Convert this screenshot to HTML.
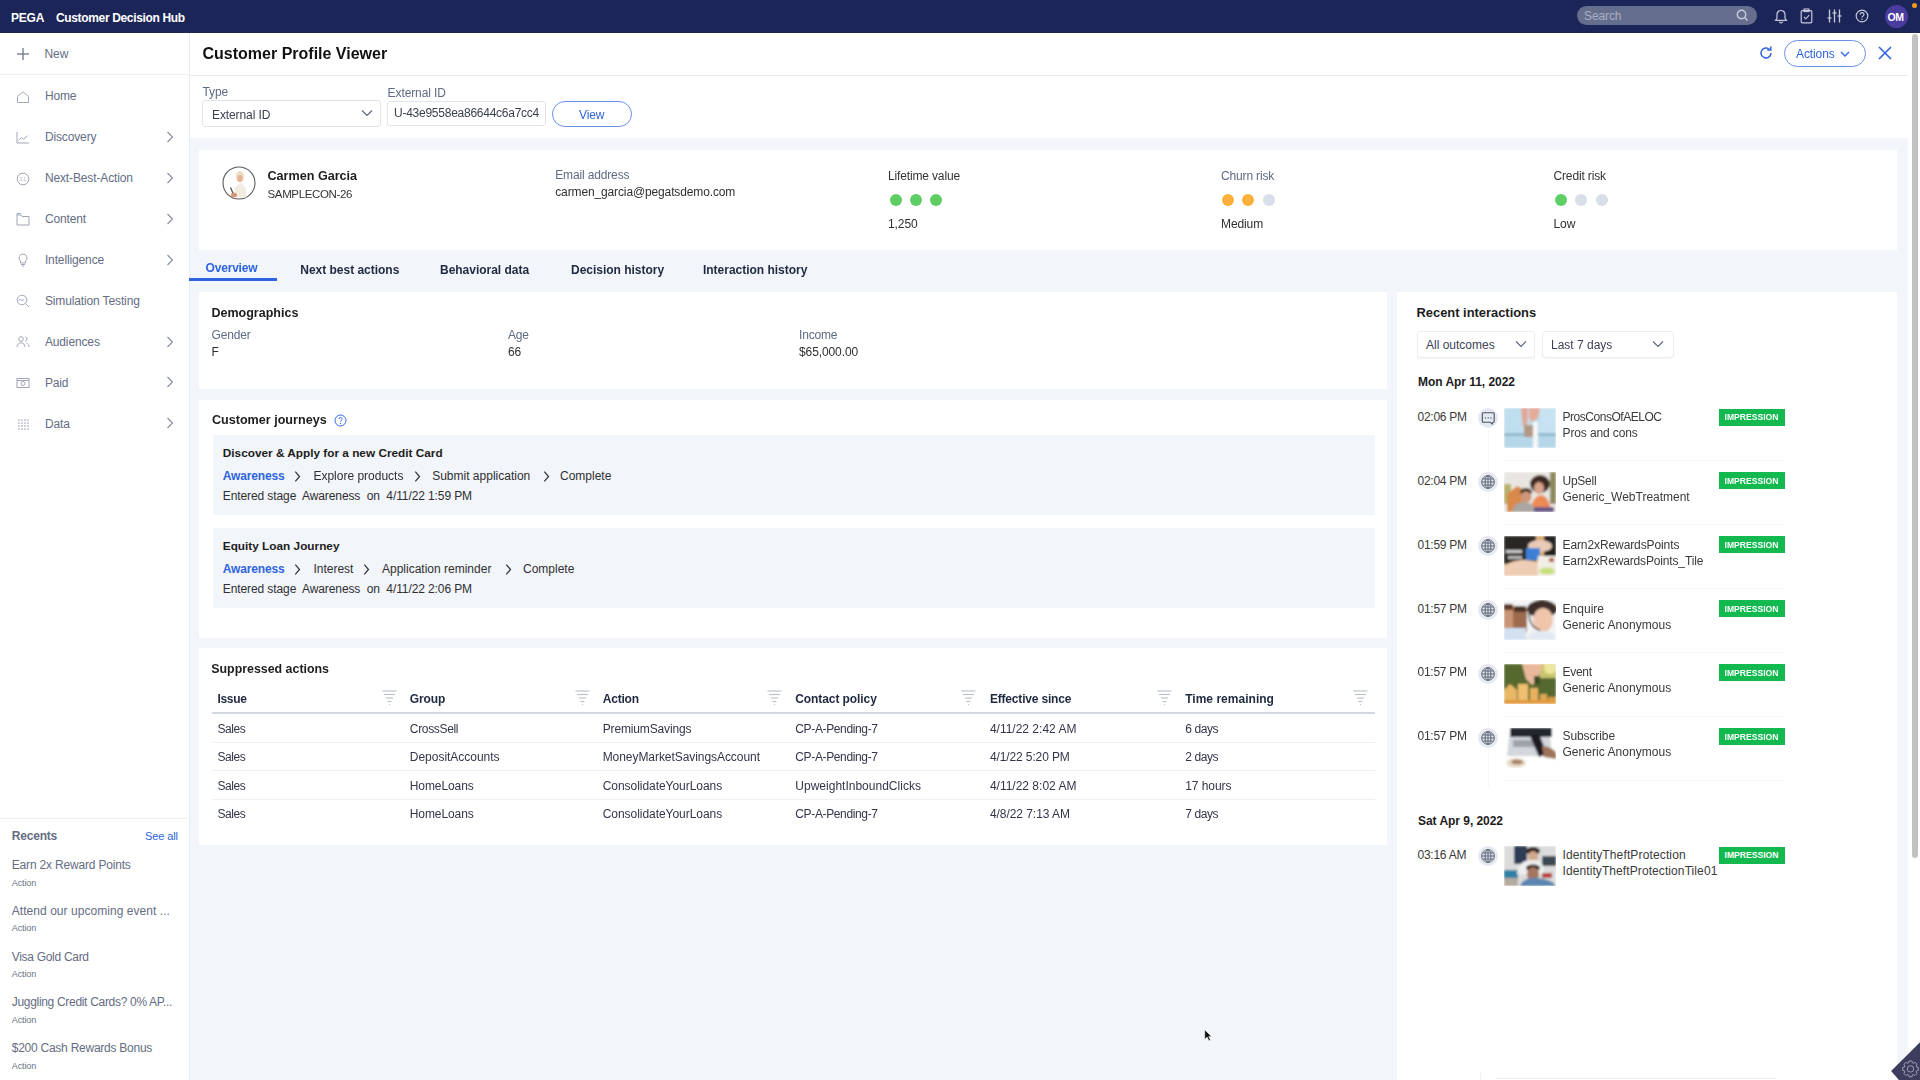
<!DOCTYPE html>
<html><head><meta charset="utf-8"><title>Customer Profile Viewer</title>
<style>
html,body{margin:0;padding:0;}
body{width:1920px;height:1080px;overflow:hidden;position:relative;background:#f2f5f9;font-family:"Liberation Sans",sans-serif;}
.t{position:absolute;white-space:nowrap;line-height:1;}
.r{position:absolute;box-sizing:border-box;}
svg.r{overflow:visible;}
#wrap{position:absolute;left:0;top:0;width:1920px;height:1080px;overflow:hidden;filter:blur(0.45px);}
</style></head><body><div id="wrap">
<svg width="0" height="0" style="position:absolute"><defs><filter id="bl" x="-10%" y="-10%" width="120%" height="120%"><feGaussianBlur stdDeviation="0.9"/></filter></defs></svg>
<div class="r" style="left:0px;top:0px;width:1920px;height:33px;background:#1c2558;"></div>
<div class="t" style="left:11.00px;top:11.84px;font-size:12px;color:#fff;font-weight:700;letter-spacing:-0.2px;">PEGA</div>
<div class="t" style="left:56.00px;top:11.84px;font-size:12px;color:#fff;font-weight:700;letter-spacing:-0.35px;">Customer Decision Hub</div>
<div class="r" style="left:1577px;top:6px;width:180px;height:19px;background:#666e8e;border-radius:10px;"></div>
<div class="t" style="left:1584.00px;top:9.84px;font-size:12px;color:#a9aec6;letter-spacing:-0.1px;">Search</div>
<svg class="r" style="left:1736px;top:9px" width="13" height="13" viewBox="0 0 13 13"><circle cx="5.5" cy="5.5" r="4.2" fill="none" stroke="#c9cce0" stroke-width="1.4"/><line x1="8.6" y1="8.6" x2="11.5" y2="11.5" stroke="#c9cce0" stroke-width="1.4"/></svg>
<svg class="r" style="left:1774px;top:9px" width="14" height="15" viewBox="0 0 14 15"><path d="M7 1.5c-2.5 0-4 2-4 4.2v3.5L1.6 11.4h10.8L11 9.2V5.7C11 3.5 9.5 1.5 7 1.5z" fill="none" stroke="#c6c9dc" stroke-width="1.2"/><path d="M5.3 12.6a1.8 1.8 0 0 0 3.4 0" fill="none" stroke="#c6c9dc" stroke-width="1.2"/></svg>
<svg class="r" style="left:1800px;top:8px" width="13" height="16" viewBox="0 0 13 16"><rect x="1.2" y="2.6" width="10.6" height="12.2" rx="1" fill="none" stroke="#c6c9dc" stroke-width="1.2"/><rect x="4" y="1" width="5" height="2.6" fill="none" stroke="#c6c9dc" stroke-width="1.1"/><path d="M4 9l1.8 1.8L9.2 7.2" fill="none" stroke="#c6c9dc" stroke-width="1.1"/></svg>
<svg class="r" style="left:1827px;top:9px" width="15" height="14" viewBox="0 0 15 14"><g stroke="#c6c9dc" stroke-width="1.3"><line x1="2.5" y1="0.5" x2="2.5" y2="13.5"/><line x1="7.5" y1="0.5" x2="7.5" y2="13.5"/><line x1="12.5" y1="0.5" x2="12.5" y2="13.5"/><line x1="0.5" y1="9" x2="4.5" y2="9"/><line x1="5.5" y1="4" x2="9.5" y2="4"/><line x1="10.5" y1="7" x2="14.5" y2="7"/></g></svg>
<svg class="r" style="left:1855px;top:9px" width="14" height="14" viewBox="0 0 14 14"><circle cx="7" cy="7" r="5.8" fill="none" stroke="#c6c9dc" stroke-width="1.2"/><path d="M5.2 5.4a1.9 1.9 0 1 1 2.6 1.8c-.6.3-.8.6-.8 1.3" fill="none" stroke="#c6c9dc" stroke-width="1.2"/><circle cx="7" cy="10.3" r=".75" fill="#c6c9dc"/></svg>
<div class="r" style="left:1885px;top:5px;width:23px;height:23px;background:#4a3b9e;border-radius:50%;"></div>
<div class="t" style="left:1887.50px;top:11.61px;font-size:10.5px;color:#fff;font-weight:700;letter-spacing:-0.4px;">OM</div>
<div class="r" style="left:1912px;top:3px;width:5px;height:5px;background:#f39a1e;border-radius:50%;"></div>
<div class="r" style="left:0px;top:33px;width:189px;height:1047px;background:#fff;"></div>
<div class="r" style="left:189px;top:33px;width:1px;height:1047px;background:#e9ecf1;"></div>
<svg class="r" style="left:16px;top:47px" width="14" height="14" viewBox="0 0 14 14"><g stroke="#6e7690" stroke-width="1.3"><line x1="7" y1="1" x2="7" y2="13"/><line x1="1" y1="7" x2="13" y2="7"/></g></svg>
<div class="t" style="left:44.50px;top:47.64px;font-size:12px;color:#656d83;letter-spacing:-0.1px;">New</div>
<div class="r" style="left:0px;top:74px;width:189px;height:1px;background:#eceef2;"></div>
<div class="t" style="left:44.90px;top:90.44px;font-size:12px;color:#656d83;letter-spacing:-0.13px;">Home</div>
<svg class="r" style="left:16px;top:89.6px" width="14" height="14" viewBox="0 0 14 14"><path d="M1.5 6.5L7 1.8l5.5 4.7V12.5h-11z" fill="none" stroke="#a2a7b7" stroke-width="1"/></svg>
<div class="t" style="left:44.90px;top:131.39px;font-size:12px;color:#656d83;letter-spacing:-0.13px;">Discovery</div>
<svg class="r" style="left:16px;top:130.6px" width="14" height="14" viewBox="0 0 14 14"><path d="M1 1v11h12M2.5 9.5l3-3 2 1.8 4-3.6" fill="none" stroke="#a2a7b7" stroke-width="1"/></svg>
<svg class="r" style="left:166px;top:130.8px" width="8" height="12" viewBox="0 0 8 12"><path d="M1.5 1l5 5-5 5" fill="none" stroke="#8a90a3" stroke-width="1.15"/></svg>
<div class="t" style="left:44.90px;top:172.34px;font-size:12px;color:#656d83;letter-spacing:-0.13px;">Next-Best-Action</div>
<svg class="r" style="left:16px;top:171.5px" width="14" height="14" viewBox="0 0 14 14"><circle cx="7" cy="7" r="5.8" fill="none" stroke="#a2a7b7" stroke-width="1"/><text x="7" y="8.8" font-size="4.5" text-anchor="middle" fill="#a2a7b7" font-family="Liberation Sans">1:1</text></svg>
<svg class="r" style="left:166px;top:171.7px" width="8" height="12" viewBox="0 0 8 12"><path d="M1.5 1l5 5-5 5" fill="none" stroke="#8a90a3" stroke-width="1.15"/></svg>
<div class="t" style="left:44.90px;top:213.29px;font-size:12px;color:#656d83;letter-spacing:-0.13px;">Content</div>
<svg class="r" style="left:16px;top:212.4px" width="14" height="14" viewBox="0 0 14 14"><path d="M1 3h4l1 1.5h7V13H1z M1 3V1.5h4" fill="none" stroke="#a2a7b7" stroke-width="1"/></svg>
<svg class="r" style="left:166px;top:212.6px" width="8" height="12" viewBox="0 0 8 12"><path d="M1.5 1l5 5-5 5" fill="none" stroke="#8a90a3" stroke-width="1.15"/></svg>
<div class="t" style="left:44.90px;top:254.24px;font-size:12px;color:#656d83;letter-spacing:-0.13px;">Intelligence</div>
<svg class="r" style="left:16px;top:253.4px" width="14" height="14" viewBox="0 0 14 14"><path d="M7 1a4 4 0 0 0-2.5 7.1V10h5V8.1A4 4 0 0 0 7 1zM5 11.5h4M5.8 13h2.4" fill="none" stroke="#a2a7b7" stroke-width="1"/></svg>
<svg class="r" style="left:166px;top:253.6px" width="8" height="12" viewBox="0 0 8 12"><path d="M1.5 1l5 5-5 5" fill="none" stroke="#8a90a3" stroke-width="1.15"/></svg>
<div class="t" style="left:44.90px;top:295.19px;font-size:12px;color:#656d83;letter-spacing:-0.13px;">Simulation Testing</div>
<svg class="r" style="left:16px;top:294.4px" width="14" height="14" viewBox="0 0 14 14"><circle cx="6" cy="6" r="4.8" fill="none" stroke="#a2a7b7" stroke-width="1"/><path d="M9.5 9.5L13 13M2.5 6.5l1.8-1.5 1.8 2 2-2" fill="none" stroke="#a2a7b7" stroke-width="1"/></svg>
<div class="t" style="left:44.90px;top:336.14px;font-size:12px;color:#656d83;letter-spacing:-0.13px;">Audiences</div>
<svg class="r" style="left:16px;top:335.3px" width="14" height="14" viewBox="0 0 14 14"><circle cx="5" cy="4" r="2.3" fill="none" stroke="#a2a7b7" stroke-width="1"/><path d="M1 12c0-2.5 1.8-4.2 4-4.2s4 1.7 4 4.2M9.3 1.8a2.2 2.2 0 0 1 0 4.3M10.5 8c1.5.6 2.5 2 2.5 4" fill="none" stroke="#a2a7b7" stroke-width="1"/></svg>
<svg class="r" style="left:166px;top:335.5px" width="8" height="12" viewBox="0 0 8 12"><path d="M1.5 1l5 5-5 5" fill="none" stroke="#8a90a3" stroke-width="1.15"/></svg>
<div class="t" style="left:44.90px;top:377.09px;font-size:12px;color:#656d83;letter-spacing:-0.13px;">Paid</div>
<svg class="r" style="left:16px;top:376.2px" width="14" height="14" viewBox="0 0 14 14"><rect x="1" y="2.5" width="12" height="9" fill="none" stroke="#a2a7b7" stroke-width="1"/><circle cx="7" cy="7.5" r="2" fill="none" stroke="#a2a7b7" stroke-width="1"/><line x1="1" y1="4.5" x2="13" y2="4.5" stroke="#a2a7b7" stroke-width="1"/></svg>
<svg class="r" style="left:166px;top:376.4px" width="8" height="12" viewBox="0 0 8 12"><path d="M1.5 1l5 5-5 5" fill="none" stroke="#8a90a3" stroke-width="1.15"/></svg>
<div class="t" style="left:44.90px;top:418.04px;font-size:12px;color:#656d83;letter-spacing:-0.13px;">Data</div>
<svg class="r" style="left:16px;top:417.2px" width="14" height="14" viewBox="0 0 14 14"><g fill="#a2a7b7"><circle cx="3" cy="3" r="0.85"/><circle cx="3" cy="6" r="0.85"/><circle cx="3" cy="9" r="0.85"/><circle cx="3" cy="12" r="0.85"/><circle cx="6" cy="3" r="0.85"/><circle cx="6" cy="6" r="0.85"/><circle cx="6" cy="9" r="0.85"/><circle cx="6" cy="12" r="0.85"/><circle cx="9" cy="3" r="0.85"/><circle cx="9" cy="6" r="0.85"/><circle cx="9" cy="9" r="0.85"/><circle cx="9" cy="12" r="0.85"/><circle cx="12" cy="3" r="0.85"/><circle cx="12" cy="6" r="0.85"/><circle cx="12" cy="9" r="0.85"/><circle cx="12" cy="12" r="0.85"/></g></svg>
<svg class="r" style="left:166px;top:417.4px" width="8" height="12" viewBox="0 0 8 12"><path d="M1.5 1l5 5-5 5" fill="none" stroke="#8a90a3" stroke-width="1.15"/></svg>
<div class="r" style="left:0px;top:818px;width:187px;height:1px;background:#eceef2;"></div>
<div class="t" style="left:11.75px;top:829.84px;font-size:12px;color:#656d83;font-weight:700;letter-spacing:-0.2px;">Recents</div>
<div class="t" style="left:145.00px;top:830.69px;font-size:11px;color:#2e64e0;letter-spacing:-0.1px;">See all</div>
<div class="t" style="left:11.75px;top:859.09px;font-size:12px;color:#656d83;letter-spacing:-0.18px;">Earn 2x Reward Points</div>
<div class="t" style="left:11.75px;top:878.63px;font-size:9px;color:#6b7388;letter-spacing:-0.1px;">Action</div>
<div class="t" style="left:11.75px;top:904.89px;font-size:12px;color:#656d83;letter-spacing:0.05px;">Attend our upcoming event ...</div>
<div class="t" style="left:11.75px;top:924.43px;font-size:9px;color:#6b7388;letter-spacing:-0.1px;">Action</div>
<div class="t" style="left:11.75px;top:950.69px;font-size:12px;color:#656d83;letter-spacing:-0.3px;">Visa Gold Card</div>
<div class="t" style="left:11.75px;top:970.23px;font-size:9px;color:#6b7388;letter-spacing:-0.1px;">Action</div>
<div class="t" style="left:11.75px;top:996.49px;font-size:12px;color:#656d83;letter-spacing:-0.31px;">Juggling Credit Cards? 0% AP...</div>
<div class="t" style="left:11.75px;top:1016.03px;font-size:9px;color:#6b7388;letter-spacing:-0.1px;">Action</div>
<div class="t" style="left:11.75px;top:1042.29px;font-size:12px;color:#656d83;letter-spacing:-0.25px;">$200 Cash Rewards Bonus</div>
<div class="t" style="left:11.75px;top:1061.83px;font-size:9px;color:#6b7388;letter-spacing:-0.1px;">Action</div>
<div class="r" style="left:190px;top:33px;width:1718px;height:43px;background:#fff;"></div>
<div class="r" style="left:190px;top:75px;width:1718px;height:1px;background:#e8ebf0;"></div>
<div class="t" style="left:202.50px;top:45.86px;font-size:16px;color:#111;font-weight:700;">Customer Profile Viewer</div>
<svg class="r" style="left:1758px;top:45px" width="16" height="16" viewBox="0 0 16 16"><path d="M13 8a5 5 0 1 1-1.6-3.7" fill="none" stroke="#2e64e0" stroke-width="1.5"/><path d="M12.8 1.5v3.6H9.2" fill="none" stroke="#2e64e0" stroke-width="1.5"/></svg>
<div class="r" style="left:1784px;top:40px;width:82px;height:27px;background:#fff;border:1px solid #6a8fe6;border-radius:14px;"></div>
<div class="t" style="left:1796.00px;top:48.14px;font-size:12px;color:#2e64e0;letter-spacing:-0.1px;">Actions</div>
<svg class="r" style="left:1840px;top:51px" width="10" height="6" viewBox="0 0 10 6"><path d="M1 1l4 4 4-4" fill="none" stroke="#2e64e0" stroke-width="1.3"/></svg>
<svg class="r" style="left:1878px;top:46px" width="14" height="14" viewBox="0 0 14 14"><path d="M1 1l12 12M13 1L1 13" stroke="#2e64e0" stroke-width="1.6"/></svg>
<div class="r" style="left:190px;top:76px;width:1718px;height:62px;background:#fff;"></div>
<div class="t" style="left:202.50px;top:85.84px;font-size:12px;color:#5d6b84;letter-spacing:-0.1px;">Type</div>
<div class="r" style="left:202px;top:100px;width:179px;height:27px;background:#fff;border:1px solid #dfe3ea;border-radius:3px;"></div>
<div class="t" style="left:212.00px;top:108.54px;font-size:12px;color:#3a3f4f;letter-spacing:-0.1px;">External ID</div>
<svg class="r" style="left:361px;top:109px" width="12" height="8" viewBox="0 0 12 8"><path d="M1 1.5l5 5 5-5" fill="none" stroke="#5f6882" stroke-width="1.2"/></svg>
<div class="t" style="left:387.60px;top:86.74px;font-size:12px;color:#5d6b84;letter-spacing:-0.1px;">External ID</div>
<div class="r" style="left:387px;top:100.5px;width:158.5px;height:25px;background:#fff;border:1px solid #dfe3ea;border-radius:3px;"></div>
<div class="t" style="left:394.00px;top:106.84px;font-size:12px;color:#3a3f4f;letter-spacing:-0.25px;">U-43e9558ea86644c6a7cc4</div>
<div class="r" style="left:552px;top:101px;width:80px;height:26px;background:#fff;border:1px solid #6a8fe6;border-radius:13px;"></div>
<div class="t" style="left:579.00px;top:108.84px;font-size:12px;color:#2e64e0;letter-spacing:-0.1px;">View</div>
<div class="r" style="left:199px;top:150px;width:1698px;height:100px;background:#fff;"></div>
<svg class="r" style="left:222px;top:166px" width="34" height="34" viewBox="0 0 34 34"><circle cx="17" cy="17" r="16" fill="#fff" stroke="#5a5a5a" stroke-width="1.1"/><ellipse cx="18" cy="10.5" rx="4.2" ry="5.5" fill="#efdcc8"/><ellipse cx="18" cy="12.5" rx="2.6" ry="3.6" fill="#e8b49a"/><path d="M11.5 31.5c0-8 2.5-13 6.5-14.5 4.5 1 6.5 6 6.5 14.5z" fill="#f4ece2"/><path d="M8.5 21.5l3 7" stroke="#555" stroke-width="1.3"/><ellipse cx="12" cy="29" rx="3" ry="2.2" fill="#d69575"/></svg>
<div class="t" style="left:267.50px;top:170.33px;font-size:12.6px;color:#1d1d1d;font-weight:700;">Carmen Garcia</div>
<div class="t" style="left:267.50px;top:188.87px;font-size:11.5px;color:#333;letter-spacing:-0.35px;">SAMPLECON-26</div>
<div class="t" style="left:555.25px;top:168.84px;font-size:12px;color:#5d6b84;letter-spacing:-0.15px;">Email address</div>
<div class="t" style="left:555.25px;top:186.34px;font-size:12px;color:#2f2f33;letter-spacing:-0.13px;">carmen_garcia@pegatsdemo.com</div>
<div class="t" style="left:888.00px;top:169.84px;font-size:12px;color:#333;letter-spacing:-0.15px;">Lifetime value</div>
<div class="r" style="left:889.75px;top:194px;width:12px;height:12px;background:#5fcf65;border-radius:50%;"></div>
<div class="r" style="left:910.0px;top:194px;width:12px;height:12px;background:#5fcf65;border-radius:50%;"></div>
<div class="r" style="left:930.25px;top:194px;width:12px;height:12px;background:#5fcf65;border-radius:50%;"></div>
<div class="t" style="left:888.00px;top:217.84px;font-size:12px;color:#2f2f33;letter-spacing:-0.1px;">1,250</div>
<div class="t" style="left:1221.00px;top:169.84px;font-size:12px;color:#5d6b84;letter-spacing:-0.15px;">Churn risk</div>
<div class="r" style="left:1222.0px;top:194px;width:12px;height:12px;background:#fbb03b;border-radius:50%;"></div>
<div class="r" style="left:1242.25px;top:194px;width:12px;height:12px;background:#fbb03b;border-radius:50%;"></div>
<div class="r" style="left:1262.5px;top:194px;width:12px;height:12px;background:#d8dfe8;border-radius:50%;"></div>
<div class="t" style="left:1221.00px;top:217.84px;font-size:12px;color:#2f2f33;letter-spacing:-0.1px;">Medium</div>
<div class="t" style="left:1553.50px;top:169.84px;font-size:12px;color:#333;letter-spacing:-0.15px;">Credit risk</div>
<div class="r" style="left:1555.0px;top:194px;width:12px;height:12px;background:#5fcf65;border-radius:50%;"></div>
<div class="r" style="left:1575.25px;top:194px;width:12px;height:12px;background:#d8dfe8;border-radius:50%;"></div>
<div class="r" style="left:1595.5px;top:194px;width:12px;height:12px;background:#d8dfe8;border-radius:50%;"></div>
<div class="t" style="left:1553.50px;top:217.84px;font-size:12px;color:#2f2f33;letter-spacing:-0.1px;">Low</div>
<div class="t" style="left:205.60px;top:262.14px;font-size:12px;color:#2e64e0;font-weight:700;letter-spacing:-0.2px;">Overview</div>
<div class="r" style="left:189px;top:278px;width:88px;height:3px;background:#2e64e0;"></div>
<div class="t" style="left:300.30px;top:264.44px;font-size:12px;color:#1f2940;font-weight:700;letter-spacing:-0.02px;">Next best actions</div>
<div class="t" style="left:440.00px;top:264.44px;font-size:12px;color:#1f2940;font-weight:700;letter-spacing:-0.02px;">Behavioral data</div>
<div class="t" style="left:571.00px;top:264.44px;font-size:12px;color:#1f2940;font-weight:700;letter-spacing:-0.02px;">Decision history</div>
<div class="t" style="left:703.00px;top:264.44px;font-size:12px;color:#1f2940;font-weight:700;letter-spacing:-0.02px;">Interaction history</div>
<div class="r" style="left:199px;top:292px;width:1188px;height:97px;background:#fff;"></div>
<div class="t" style="left:211.50px;top:306.67px;font-size:12.5px;color:#1d1d1d;font-weight:700;">Demographics</div>
<div class="t" style="left:211.50px;top:328.59px;font-size:12px;color:#5d6b84;letter-spacing:-0.17px;">Gender</div>
<div class="t" style="left:211.50px;top:346.24px;font-size:12px;color:#2f2f33;letter-spacing:-0.1px;">F</div>
<div class="t" style="left:508.00px;top:328.59px;font-size:12px;color:#5d6b84;letter-spacing:-0.17px;">Age</div>
<div class="t" style="left:508.00px;top:346.24px;font-size:12px;color:#2f2f33;letter-spacing:-0.1px;">66</div>
<div class="t" style="left:799.00px;top:328.59px;font-size:12px;color:#5d6b84;letter-spacing:-0.17px;">Income</div>
<div class="t" style="left:799.00px;top:346.24px;font-size:12px;color:#2f2f33;letter-spacing:-0.1px;">$65,000.00</div>
<div class="r" style="left:199px;top:400px;width:1188px;height:238px;background:#fff;"></div>
<div class="t" style="left:211.90px;top:413.73px;font-size:12.6px;color:#1d1d1d;font-weight:700;">Customer journeys</div>
<svg class="r" style="left:334px;top:414px" width="13" height="13" viewBox="0 0 13 13"><circle cx="6.5" cy="6.5" r="5.5" fill="none" stroke="#2e64e0" stroke-width="1"/><path d="M4.9 5a1.6 1.6 0 1 1 2.3 1.5c-.5.3-.7.5-.7 1.1" fill="none" stroke="#2e64e0" stroke-width="1"/><circle cx="6.5" cy="9.4" r=".6" fill="#2e64e0"/></svg>
<div class="r" style="left:212.6px;top:435.3px;width:1162.4px;height:80px;background:#f2f5f9;"></div>
<div class="t" style="left:222.80px;top:448.31px;font-size:11.8px;color:#1d1d1d;font-weight:700;">Discover &amp; Apply for a new Credit Card</div>
<div class="t" style="left:222.80px;top:470.44px;font-size:12px;color:#2e64e0;font-weight:700;letter-spacing:-0.16px;">Awareness</div>
<svg class="r" style="left:294.3px;top:471.2px" width="7" height="11" viewBox="0 0 7 11"><path d="M1.3 0.6l4.2 4.9-4.2 4.9" fill="none" stroke="#383838" stroke-width="1.25"/></svg>
<div class="t" style="left:313.40px;top:470.44px;font-size:12px;color:#2f2f33;">Explore products</div>
<svg class="r" style="left:413.8px;top:471.2px" width="7" height="11" viewBox="0 0 7 11"><path d="M1.3 0.6l4.2 4.9-4.2 4.9" fill="none" stroke="#383838" stroke-width="1.25"/></svg>
<div class="t" style="left:432.20px;top:470.44px;font-size:12px;color:#2f2f33;">Submit application</div>
<svg class="r" style="left:543.3px;top:471.2px" width="7" height="11" viewBox="0 0 7 11"><path d="M1.3 0.6l4.2 4.9-4.2 4.9" fill="none" stroke="#383838" stroke-width="1.25"/></svg>
<div class="t" style="left:560.00px;top:470.44px;font-size:12px;color:#2f2f33;">Complete</div>
<div class="t" style="left:222.80px;top:489.84px;font-size:12px;color:#2f2f33;letter-spacing:-0.1px;white-space:pre;">Entered stage  Awareness  on  4/11/22 1:59 PM</div>
<div class="r" style="left:212.6px;top:528px;width:1162.4px;height:80px;background:#f2f5f9;"></div>
<div class="t" style="left:222.80px;top:541.01px;font-size:11.8px;color:#1d1d1d;font-weight:700;">Equity Loan Journey</div>
<div class="t" style="left:222.80px;top:563.14px;font-size:12px;color:#2e64e0;font-weight:700;letter-spacing:-0.16px;">Awareness</div>
<svg class="r" style="left:294.3px;top:563.9px" width="7" height="11" viewBox="0 0 7 11"><path d="M1.3 0.6l4.2 4.9-4.2 4.9" fill="none" stroke="#383838" stroke-width="1.25"/></svg>
<div class="t" style="left:313.40px;top:563.14px;font-size:12px;color:#2f2f33;">Interest</div>
<svg class="r" style="left:363.3px;top:563.9px" width="7" height="11" viewBox="0 0 7 11"><path d="M1.3 0.6l4.2 4.9-4.2 4.9" fill="none" stroke="#383838" stroke-width="1.25"/></svg>
<div class="t" style="left:382.00px;top:563.14px;font-size:12px;color:#2f2f33;">Application reminder</div>
<svg class="r" style="left:505.3px;top:563.9px" width="7" height="11" viewBox="0 0 7 11"><path d="M1.3 0.6l4.2 4.9-4.2 4.9" fill="none" stroke="#383838" stroke-width="1.25"/></svg>
<div class="t" style="left:523.00px;top:563.14px;font-size:12px;color:#2f2f33;">Complete</div>
<div class="t" style="left:222.80px;top:582.54px;font-size:12px;color:#2f2f33;letter-spacing:-0.1px;white-space:pre;">Entered stage  Awareness  on  4/11/22 2:06 PM</div>
<div class="r" style="left:199px;top:648px;width:1188px;height:197px;background:#fff;"></div>
<div class="t" style="left:211.25px;top:663.00px;font-size:12.4px;color:#1d1d1d;font-weight:700;">Suppressed actions</div>
<div class="t" style="left:217.50px;top:692.94px;font-size:12px;color:#1f2940;font-weight:700;letter-spacing:-0.34px;">Issue</div>
<svg class="r" style="left:381.5px;top:690px" width="15" height="15" viewBox="0 0 15 15"><g stroke="#b9bfca" stroke-width="1.1"><line x1="0.5" y1="1" x2="14.5" y2="1"/><line x1="2" y1="4.5" x2="13" y2="4.5"/><line x1="4" y1="8" x2="11" y2="8"/><line x1="5.5" y1="11.5" x2="9.5" y2="11.5"/><line x1="7" y1="14.5" x2="8" y2="14.5"/></g></svg>
<div class="t" style="left:409.80px;top:692.94px;font-size:12px;color:#1f2940;font-weight:700;letter-spacing:-0.1px;">Group</div>
<svg class="r" style="left:574.5px;top:690px" width="15" height="15" viewBox="0 0 15 15"><g stroke="#b9bfca" stroke-width="1.1"><line x1="0.5" y1="1" x2="14.5" y2="1"/><line x1="2" y1="4.5" x2="13" y2="4.5"/><line x1="4" y1="8" x2="11" y2="8"/><line x1="5.5" y1="11.5" x2="9.5" y2="11.5"/><line x1="7" y1="14.5" x2="8" y2="14.5"/></g></svg>
<div class="t" style="left:602.70px;top:692.94px;font-size:12px;color:#1f2940;font-weight:700;letter-spacing:-0.19px;">Action</div>
<svg class="r" style="left:767.2px;top:690px" width="15" height="15" viewBox="0 0 15 15"><g stroke="#b9bfca" stroke-width="1.1"><line x1="0.5" y1="1" x2="14.5" y2="1"/><line x1="2" y1="4.5" x2="13" y2="4.5"/><line x1="4" y1="8" x2="11" y2="8"/><line x1="5.5" y1="11.5" x2="9.5" y2="11.5"/><line x1="7" y1="14.5" x2="8" y2="14.5"/></g></svg>
<div class="t" style="left:795.30px;top:692.94px;font-size:12px;color:#1f2940;font-weight:700;letter-spacing:-0.09px;">Contact policy</div>
<svg class="r" style="left:961.3px;top:690px" width="15" height="15" viewBox="0 0 15 15"><g stroke="#b9bfca" stroke-width="1.1"><line x1="0.5" y1="1" x2="14.5" y2="1"/><line x1="2" y1="4.5" x2="13" y2="4.5"/><line x1="4" y1="8" x2="11" y2="8"/><line x1="5.5" y1="11.5" x2="9.5" y2="11.5"/><line x1="7" y1="14.5" x2="8" y2="14.5"/></g></svg>
<div class="t" style="left:989.90px;top:692.94px;font-size:12px;color:#1f2940;font-weight:700;letter-spacing:-0.18px;">Effective since</div>
<svg class="r" style="left:1156.5px;top:690px" width="15" height="15" viewBox="0 0 15 15"><g stroke="#b9bfca" stroke-width="1.1"><line x1="0.5" y1="1" x2="14.5" y2="1"/><line x1="2" y1="4.5" x2="13" y2="4.5"/><line x1="4" y1="8" x2="11" y2="8"/><line x1="5.5" y1="11.5" x2="9.5" y2="11.5"/><line x1="7" y1="14.5" x2="8" y2="14.5"/></g></svg>
<div class="t" style="left:1185.20px;top:692.94px;font-size:12px;color:#1f2940;font-weight:700;letter-spacing:0.02px;">Time remaining</div>
<svg class="r" style="left:1352.7px;top:690px" width="15" height="15" viewBox="0 0 15 15"><g stroke="#b9bfca" stroke-width="1.1"><line x1="0.5" y1="1" x2="14.5" y2="1"/><line x1="2" y1="4.5" x2="13" y2="4.5"/><line x1="4" y1="8" x2="11" y2="8"/><line x1="5.5" y1="11.5" x2="9.5" y2="11.5"/><line x1="7" y1="14.5" x2="8" y2="14.5"/></g></svg>
<div class="r" style="left:212px;top:712px;width:1163px;height:2px;background:#d3d8e0;"></div>
<div class="t" style="left:217.50px;top:722.94px;font-size:12px;color:#33364a;letter-spacing:-0.45px;">Sales</div>
<div class="t" style="left:409.80px;top:722.94px;font-size:12px;color:#33364a;letter-spacing:-0.33px;">CrossSell</div>
<div class="t" style="left:602.70px;top:722.94px;font-size:12px;color:#33364a;letter-spacing:-0.14px;">PremiumSavings</div>
<div class="t" style="left:795.30px;top:722.94px;font-size:12px;color:#33364a;letter-spacing:-0.36px;">CP-A-Pending-7</div>
<div class="t" style="left:989.90px;top:722.94px;font-size:12px;color:#33364a;">4/11/22 2:42 AM</div>
<div class="t" style="left:1185.20px;top:722.94px;font-size:12px;color:#33364a;letter-spacing:-0.41px;">6 days</div>
<div class="t" style="left:217.50px;top:751.14px;font-size:12px;color:#33364a;letter-spacing:-0.45px;">Sales</div>
<div class="t" style="left:409.80px;top:751.14px;font-size:12px;color:#33364a;letter-spacing:-0.02px;">DepositAccounts</div>
<div class="t" style="left:602.70px;top:751.14px;font-size:12px;color:#33364a;letter-spacing:-0.06px;">MoneyMarketSavingsAccount</div>
<div class="t" style="left:795.30px;top:751.14px;font-size:12px;color:#33364a;letter-spacing:-0.36px;">CP-A-Pending-7</div>
<div class="t" style="left:989.90px;top:751.14px;font-size:12px;color:#33364a;letter-spacing:-0.11px;">4/1/22 5:20 PM</div>
<div class="t" style="left:1185.20px;top:751.14px;font-size:12px;color:#33364a;letter-spacing:-0.41px;">2 days</div>
<div class="t" style="left:217.50px;top:779.84px;font-size:12px;color:#33364a;letter-spacing:-0.45px;">Sales</div>
<div class="t" style="left:409.80px;top:779.84px;font-size:12px;color:#33364a;letter-spacing:-0.09px;">HomeLoans</div>
<div class="t" style="left:602.70px;top:779.84px;font-size:12px;color:#33364a;letter-spacing:-0.04px;">ConsolidateYourLoans</div>
<div class="t" style="left:795.30px;top:779.84px;font-size:12px;color:#33364a;letter-spacing:0.01px;">UpweightInboundClicks</div>
<div class="t" style="left:989.90px;top:779.84px;font-size:12px;color:#33364a;">4/11/22 8:02 AM</div>
<div class="t" style="left:1185.20px;top:779.84px;font-size:12px;color:#33364a;letter-spacing:-0.06px;">17 hours</div>
<div class="t" style="left:217.50px;top:808.14px;font-size:12px;color:#33364a;letter-spacing:-0.45px;">Sales</div>
<div class="t" style="left:409.80px;top:808.14px;font-size:12px;color:#33364a;letter-spacing:-0.09px;">HomeLoans</div>
<div class="t" style="left:602.70px;top:808.14px;font-size:12px;color:#33364a;letter-spacing:-0.04px;">ConsolidateYourLoans</div>
<div class="t" style="left:795.30px;top:808.14px;font-size:12px;color:#33364a;letter-spacing:-0.36px;">CP-A-Pending-7</div>
<div class="t" style="left:989.90px;top:808.14px;font-size:12px;color:#33364a;letter-spacing:-0.05px;">4/8/22 7:13 AM</div>
<div class="t" style="left:1185.20px;top:808.14px;font-size:12px;color:#33364a;letter-spacing:-0.41px;">7 days</div>
<div class="r" style="left:212px;top:742px;width:1163px;height:1px;background:#eef0f4;"></div>
<div class="r" style="left:212px;top:770px;width:1163px;height:1px;background:#eef0f4;"></div>
<div class="r" style="left:212px;top:799px;width:1163px;height:1px;background:#eef0f4;"></div>
<div class="r" style="left:1397px;top:292px;width:500px;height:788px;background:#fff;"></div>
<div class="t" style="left:1416.50px;top:307.28px;font-size:12.9px;color:#1d1d1d;font-weight:700;">Recent interactions</div>
<div class="r" style="left:1416.5px;top:331px;width:118.5px;height:26.5px;background:#fff;border:1px solid #eceef2;border-radius:3px;box-sizing:border-box;box-shadow:0 1px 1px rgba(0,0,0,0.04);"></div>
<div class="t" style="left:1426.00px;top:339.24px;font-size:12px;color:#3d4157;">All outcomes</div>
<svg class="r" style="left:1515px;top:340px" width="12" height="8" viewBox="0 0 12 8"><path d="M1 1.5l5 5 5-5" fill="none" stroke="#5f6882" stroke-width="1.2"/></svg>
<div class="r" style="left:1542px;top:331px;width:132px;height:26.5px;background:#fff;border:1px solid #eceef2;border-radius:3px;box-sizing:border-box;box-shadow:0 1px 1px rgba(0,0,0,0.04);"></div>
<div class="t" style="left:1551.00px;top:339.24px;font-size:12px;color:#3d4157;">Last 7 days</div>
<svg class="r" style="left:1652px;top:340px" width="12" height="8" viewBox="0 0 12 8"><path d="M1 1.5l5 5 5-5" fill="none" stroke="#5f6882" stroke-width="1.2"/></svg>
<div class="t" style="left:1418.00px;top:376.09px;font-size:12px;color:#1d1d1d;font-weight:700;letter-spacing:-0.04px;">Mon Apr 11, 2022</div>
<div class="r" style="left:1487.5px;top:428px;width:1px;height:360px;background:#f7f8fa;"></div>
<div class="t" style="left:1417.50px;top:410.84px;font-size:12px;color:#3a3a3a;letter-spacing:-0.25px;">02:06 PM</div>
<svg class="r" style="left:1478.0px;top:408.2px" width="20" height="20" viewBox="0 0 20 20"><circle cx="10" cy="10" r="10" fill="#e4e9f1"/><path d="M5.3 4.7H15.2Q16.2 4.7 16.2 5.7V13.3Q16.2 14.3 15.2 14.3H14.9L14.2 16.1L12.4 14.3H5.3Q4.3 14.3 4.3 13.3V5.7Q4.3 4.7 5.3 4.7z" fill="none" stroke="#4a4f5e" stroke-width="1.1"/><g fill="#4a4f5e"><circle cx="7.4" cy="9.9" r=".65"/><circle cx="10.2" cy="9.9" r=".65"/><circle cx="13" cy="9.9" r=".65"/></g></svg>
<svg class="r" style="left:1504px;top:408.0px;overflow:hidden" width="52" height="40" viewBox="0 0 52 40"><g filter="url(#bl)"><rect width="52" height="40" fill="#bfdeee"/><rect x="36" width="16" height="40" fill="#c7e3f1"/><rect y="25" width="52" height="3" fill="#93bacd"/><rect y="28" width="52" height="12" fill="#b6d7e8"/><path d="M17 0h7l-1 18h-4z" fill="#e3a593"/><path d="M25 0h11l-2 10-6 4-3-4z" fill="#e6ab99"/><rect x="20" y="17" width="9" height="12" fill="#b39881"/><rect x="29" y="14" width="5" height="26" fill="#f5f7f8"/></g></svg>
<div class="t" style="left:1562.50px;top:410.84px;font-size:12px;color:#3a3a3a;letter-spacing:-0.47px;">ProsConsOfAELOC</div>
<div class="t" style="left:1562.50px;top:426.84px;font-size:12px;color:#3a3a3a;letter-spacing:-0.12px;">Pros and cons</div>
<div class="r" style="left:1718.5px;top:408.5px;width:66.5px;height:17px;background:#12b94f;"></div>
<div class="t" style="left:1724.50px;top:413.02px;font-size:8.6px;color:#fff;font-weight:700;">IMPRESSION</div>
<div class="r" style="left:1504px;top:460px;width:282px;height:1px;background:#f8f9fb;"></div>
<div class="t" style="left:1417.50px;top:474.74px;font-size:12px;color:#3a3a3a;letter-spacing:-0.25px;">02:04 PM</div>
<svg class="r" style="left:1478.0px;top:472.1px" width="20" height="20" viewBox="0 0 20 20"><circle cx="10" cy="10" r="10" fill="#e4e9f1"/><g fill="none" stroke="#5d6372" stroke-width="1"><circle cx="10" cy="10" r="6.3"/><ellipse cx="10" cy="10" rx="2.9" ry="6.3"/><line x1="3.7" y1="10" x2="16.3" y2="10"/><line x1="4.6" y1="7" x2="15.4" y2="7"/><line x1="4.6" y1="13" x2="15.4" y2="13"/><line x1="10" y1="3.7" x2="10" y2="16.3"/></g></svg>
<svg class="r" style="left:1504px;top:471.9px;overflow:hidden" width="52" height="40" viewBox="0 0 52 40"><g filter="url(#bl)"><rect width="52" height="40" fill="#e9e6e1"/><rect x="0" y="12" width="7" height="20" fill="#b7b16a"/><path d="M3 40V22l10-8 8 4v22z" fill="#d98a4c"/><rect x="46" y="0" width="6" height="32" fill="#8e8a5e"/><ellipse cx="36" cy="12" rx="10" ry="9" fill="#3d2b22"/><ellipse cx="35" cy="16" rx="5" ry="6" fill="#d9a38c"/><path d="M26 40c1-10 5-16 11-17 6 1 9 7 10 17z" fill="#ec8a55"/><ellipse cx="22" cy="20" rx="6" ry="4" fill="#4a3428"/><ellipse cx="22" cy="25" rx="5.5" ry="5.5" fill="#cf9678"/><path d="M8 40c1-7 6-10 12-10s10 3 12 10z" fill="#aaa6a1"/><rect x="30" y="35" width="20" height="5" fill="#6a5a86"/></g></svg>
<div class="t" style="left:1562.50px;top:474.74px;font-size:12px;color:#3a3a3a;letter-spacing:-0.24px;">UpSell</div>
<div class="t" style="left:1562.50px;top:490.74px;font-size:12px;color:#3a3a3a;letter-spacing:-0.01px;">Generic_WebTreatment</div>
<div class="r" style="left:1718.5px;top:472.4px;width:66.5px;height:17px;background:#12b94f;"></div>
<div class="t" style="left:1724.50px;top:476.92px;font-size:8.6px;color:#fff;font-weight:700;">IMPRESSION</div>
<div class="r" style="left:1504px;top:524px;width:282px;height:1px;background:#f8f9fb;"></div>
<div class="t" style="left:1417.50px;top:538.64px;font-size:12px;color:#3a3a3a;letter-spacing:-0.25px;">01:59 PM</div>
<svg class="r" style="left:1478.0px;top:536.0px" width="20" height="20" viewBox="0 0 20 20"><circle cx="10" cy="10" r="10" fill="#e4e9f1"/><g fill="none" stroke="#5d6372" stroke-width="1"><circle cx="10" cy="10" r="6.3"/><ellipse cx="10" cy="10" rx="2.9" ry="6.3"/><line x1="3.7" y1="10" x2="16.3" y2="10"/><line x1="4.6" y1="7" x2="15.4" y2="7"/><line x1="4.6" y1="13" x2="15.4" y2="13"/><line x1="10" y1="3.7" x2="10" y2="16.3"/></g></svg>
<svg class="r" style="left:1504px;top:535.8px;overflow:hidden" width="52" height="40" viewBox="0 0 52 40"><g filter="url(#bl)"><rect width="52" height="40" fill="#d7aa72"/><rect x="0" y="0" width="32" height="28" fill="#2a2522"/><rect x="40" y="0" width="12" height="20" fill="#222"/><rect x="2" y="14" width="16" height="3" fill="#c8c8c8"/><rect x="4" y="20" width="14" height="3" fill="#b5b5b5"/><ellipse cx="36" cy="10" rx="12" ry="6" fill="#e9cbb8"/><rect x="22" y="12" width="14" height="12" fill="#3b80d6"/><path d="M0 40V30c8-6 20-8 34-4v14z" fill="#efcdb4"/><rect x="34" y="20" width="18" height="20" fill="#f2eee6"/><ellipse cx="43" cy="35" rx="8" ry="3.5" fill="#c9e07e"/><rect x="45" y="22" width="5" height="4" fill="#b55b3c"/></g></svg>
<div class="t" style="left:1562.50px;top:538.64px;font-size:12px;color:#3a3a3a;letter-spacing:-0.1px;">Earn2xRewardsPoints</div>
<div class="t" style="left:1562.50px;top:554.64px;font-size:12px;color:#3a3a3a;letter-spacing:-0.15px;">Earn2xRewardsPoints_Tile</div>
<div class="r" style="left:1718.5px;top:536.3px;width:66.5px;height:17px;background:#12b94f;"></div>
<div class="t" style="left:1724.50px;top:540.82px;font-size:8.6px;color:#fff;font-weight:700;">IMPRESSION</div>
<div class="r" style="left:1504px;top:588px;width:282px;height:1px;background:#f8f9fb;"></div>
<div class="t" style="left:1417.50px;top:602.54px;font-size:12px;color:#3a3a3a;letter-spacing:-0.25px;">01:57 PM</div>
<svg class="r" style="left:1478.0px;top:599.9px" width="20" height="20" viewBox="0 0 20 20"><circle cx="10" cy="10" r="10" fill="#e4e9f1"/><g fill="none" stroke="#5d6372" stroke-width="1"><circle cx="10" cy="10" r="6.3"/><ellipse cx="10" cy="10" rx="2.9" ry="6.3"/><line x1="3.7" y1="10" x2="16.3" y2="10"/><line x1="4.6" y1="7" x2="15.4" y2="7"/><line x1="4.6" y1="13" x2="15.4" y2="13"/><line x1="10" y1="3.7" x2="10" y2="16.3"/></g></svg>
<svg class="r" style="left:1504px;top:599.7px;overflow:hidden" width="52" height="40" viewBox="0 0 52 40"><g filter="url(#bl)"><rect width="52" height="40" fill="#f4f4f6"/><rect x="0" y="6" width="10" height="24" fill="#c99374"/><rect x="0" y="4" width="9" height="6" fill="#5b3a2c"/><rect x="9" y="8" width="14" height="24" fill="#9c6a4e"/><rect x="10" y="6" width="12" height="6" fill="#4a3226"/><rect x="0" y="28" width="22" height="12" fill="#d2e0f0"/><ellipse cx="38" cy="9" rx="15" ry="9" fill="#3c2e2a"/><ellipse cx="39" cy="20" rx="10" ry="12" fill="#efc6ab"/><path d="M22 40c2-7 8-9 17-9s13 2 13 9z" fill="#e3e9f2"/><path d="M25 12c0 10 3 16 11 18" fill="none" stroke="#2e2e2e" stroke-width="1.4"/></g></svg>
<div class="t" style="left:1562.50px;top:602.54px;font-size:12px;color:#3a3a3a;letter-spacing:0.03px;">Enquire</div>
<div class="t" style="left:1562.50px;top:618.54px;font-size:12px;color:#3a3a3a;letter-spacing:0.04px;">Generic Anonymous</div>
<div class="r" style="left:1718.5px;top:600.2px;width:66.5px;height:17px;background:#12b94f;"></div>
<div class="t" style="left:1724.50px;top:604.72px;font-size:8.6px;color:#fff;font-weight:700;">IMPRESSION</div>
<div class="r" style="left:1504px;top:652px;width:282px;height:1px;background:#f8f9fb;"></div>
<div class="t" style="left:1417.50px;top:666.44px;font-size:12px;color:#3a3a3a;letter-spacing:-0.25px;">01:57 PM</div>
<svg class="r" style="left:1478.0px;top:663.8px" width="20" height="20" viewBox="0 0 20 20"><circle cx="10" cy="10" r="10" fill="#e4e9f1"/><g fill="none" stroke="#5d6372" stroke-width="1"><circle cx="10" cy="10" r="6.3"/><ellipse cx="10" cy="10" rx="2.9" ry="6.3"/><line x1="3.7" y1="10" x2="16.3" y2="10"/><line x1="4.6" y1="7" x2="15.4" y2="7"/><line x1="4.6" y1="13" x2="15.4" y2="13"/><line x1="10" y1="3.7" x2="10" y2="16.3"/></g></svg>
<svg class="r" style="left:1504px;top:663.6px;overflow:hidden" width="52" height="40" viewBox="0 0 52 40"><g filter="url(#bl)"><rect width="52" height="40" fill="#55672f"/><rect x="36" y="0" width="16" height="14" fill="#c9c56e"/><circle cx="46" cy="4" r="6" fill="#efe7a0"/><path d="M18 0h20l-4 18-6 3-6-6z" fill="#eab99c"/><rect x="30" y="12" width="6" height="8" fill="#3c4a22"/><path d="M0 40V26l6-6 7 6v14z" fill="#e8b866"/><rect x="14" y="20" width="10" height="20" fill="#f0c070"/><rect x="26" y="24" width="8" height="16" fill="#e8b25e"/><rect x="36" y="30" width="7" height="10" fill="#dea752"/><rect x="44" y="33" width="8" height="7" fill="#d89c46"/><rect y="36" width="52" height="4" fill="#e29a3c"/></g></svg>
<div class="t" style="left:1562.50px;top:666.44px;font-size:12px;color:#3a3a3a;letter-spacing:-0.28px;">Event</div>
<div class="t" style="left:1562.50px;top:682.44px;font-size:12px;color:#3a3a3a;letter-spacing:0.04px;">Generic Anonymous</div>
<div class="r" style="left:1718.5px;top:664.1px;width:66.5px;height:17px;background:#12b94f;"></div>
<div class="t" style="left:1724.50px;top:668.62px;font-size:8.6px;color:#fff;font-weight:700;">IMPRESSION</div>
<div class="r" style="left:1504px;top:716px;width:282px;height:1px;background:#f8f9fb;"></div>
<div class="t" style="left:1417.50px;top:730.34px;font-size:12px;color:#3a3a3a;letter-spacing:-0.25px;">01:57 PM</div>
<svg class="r" style="left:1478.0px;top:727.7px" width="20" height="20" viewBox="0 0 20 20"><circle cx="10" cy="10" r="10" fill="#e4e9f1"/><g fill="none" stroke="#5d6372" stroke-width="1"><circle cx="10" cy="10" r="6.3"/><ellipse cx="10" cy="10" rx="2.9" ry="6.3"/><line x1="3.7" y1="10" x2="16.3" y2="10"/><line x1="4.6" y1="7" x2="15.4" y2="7"/><line x1="4.6" y1="13" x2="15.4" y2="13"/><line x1="10" y1="3.7" x2="10" y2="16.3"/></g></svg>
<svg class="r" style="left:1504px;top:727.5px;overflow:hidden" width="52" height="40" viewBox="0 0 52 40"><g filter="url(#bl)"><rect width="52" height="40" fill="#fff"/><rect x="6" y="0" width="42" height="9" fill="#23262e"/><path d="M5 9h41l2 19H3z" fill="#d3d6db"/><rect x="9" y="12" width="22" height="7" fill="#9ea3aa"/><path d="M26 8l9-2 8 20-8 3z" fill="#1f1f24"/><path d="M38 18c6 0 12 3 14 7v6l-12-2z" fill="#9e735a"/><ellipse cx="12" cy="35" rx="10" ry="5" fill="#e8dccd"/><ellipse cx="13" cy="34" rx="6" ry="2.5" fill="#a88060"/></g></svg>
<div class="t" style="left:1562.50px;top:730.34px;font-size:12px;color:#3a3a3a;letter-spacing:-0.1px;">Subscribe</div>
<div class="t" style="left:1562.50px;top:746.34px;font-size:12px;color:#3a3a3a;letter-spacing:0.04px;">Generic Anonymous</div>
<div class="r" style="left:1718.5px;top:728.0px;width:66.5px;height:17px;background:#12b94f;"></div>
<div class="t" style="left:1724.50px;top:732.52px;font-size:8.6px;color:#fff;font-weight:700;">IMPRESSION</div>
<div class="r" style="left:1504px;top:780px;width:282px;height:1px;background:#f8f9fb;"></div>
<div class="t" style="left:1418.00px;top:814.54px;font-size:12px;color:#1d1d1d;font-weight:700;letter-spacing:-0.04px;">Sat Apr 9, 2022</div>
<div class="t" style="left:1417.50px;top:849.04px;font-size:12px;color:#3a3a3a;letter-spacing:-0.25px;">03:16 AM</div>
<svg class="r" style="left:1478.0px;top:846.4px" width="20" height="20" viewBox="0 0 20 20"><circle cx="10" cy="10" r="10" fill="#e4e9f1"/><g fill="none" stroke="#5d6372" stroke-width="1"><circle cx="10" cy="10" r="6.3"/><ellipse cx="10" cy="10" rx="2.9" ry="6.3"/><line x1="3.7" y1="10" x2="16.3" y2="10"/><line x1="4.6" y1="7" x2="15.4" y2="7"/><line x1="4.6" y1="13" x2="15.4" y2="13"/><line x1="10" y1="3.7" x2="10" y2="16.3"/></g></svg>
<svg class="r" style="left:1504px;top:846.2px;overflow:hidden" width="52" height="40" viewBox="0 0 52 40"><g filter="url(#bl)"><rect width="52" height="40" fill="#dcdcdc"/><rect x="10" y="0" width="13" height="18" fill="#2f3d54"/><rect x="38" y="10" width="14" height="10" fill="#3e4a55"/><rect x="0" y="24" width="14" height="8" fill="#2f7fa5"/><ellipse cx="29" cy="5" rx="7" ry="4" fill="#2a1f1a"/><ellipse cx="29" cy="11" rx="5" ry="6" fill="#d2a88c"/><path d="M13 28c1-10 6-14 16-14 8 0 11 4 11 14z" fill="#efefef"/><ellipse cx="29" cy="22" rx="7" ry="3.5" fill="#1f1f1f"/><ellipse cx="29" cy="28" rx="6" ry="7" fill="#a6755d"/><path d="M16 40c2-6 8-8 14-8s18 1 22 8z" fill="#5b86b2"/><rect x="38" y="27" width="10" height="5" fill="#b6403a"/><rect x="0" y="32" width="14" height="8" fill="#b5aaa0"/></g></svg>
<div class="t" style="left:1562.50px;top:849.04px;font-size:12px;color:#3a3a3a;letter-spacing:0.14px;">IdentityTheftProtection</div>
<div class="t" style="left:1562.50px;top:865.04px;font-size:12px;color:#3a3a3a;letter-spacing:0.09px;">IdentityTheftProtectionTile01</div>
<div class="r" style="left:1718.5px;top:846.7px;width:66.5px;height:17px;background:#12b94f;"></div>
<div class="t" style="left:1724.50px;top:851.22px;font-size:8.6px;color:#fff;font-weight:700;">IMPRESSION</div>
<div class="r" style="left:1496px;top:1078px;width:280px;height:1px;background:#eceef2;"></div>
<div class="r" style="left:1480px;top:1072px;width:1px;height:8px;background:#f0f1f4;"></div>
<div class="r" style="left:1908px;top:33px;width:12px;height:1047px;background:#fff;"></div>
<div class="r" style="left:1912px;top:34px;width:6px;height:824px;background:#c2c2c2;border-radius:3px;"></div>
<svg class="r" style="left:1880px;top:1038px" width="40" height="42" viewBox="0 0 40 42"><path d="M11.1 33.1L40 4.2V42H18.9z" fill="#3c3d5c"/><path d="M36.50 28.97 L38.37 29.44 L38.37 32.36 L36.50 32.83 L36.10 33.78 L37.10 35.43 L35.03 37.50 L33.38 36.50 L32.43 36.90 L31.96 38.77 L29.04 38.77 L28.57 36.90 L27.62 36.50 L25.97 37.50 L23.90 35.43 L24.90 33.78 L24.50 32.83 L22.63 32.36 L22.63 29.44 L24.50 28.97 L24.90 28.02 L23.90 26.37 L25.97 24.30 L27.62 25.30 L28.57 24.90 L29.04 23.03 L31.96 23.03 L32.43 24.90 L33.38 25.30 L35.03 24.30 L37.10 26.37 L36.10 28.02Z" fill="none" stroke="#aaa7c2" stroke-width="0.9"/><circle cx="30.5" cy="30.9" r="3.2" fill="none" stroke="#aaa7c2" stroke-width="0.9"/></svg>
<svg class="r" style="left:1203.5px;top:1029px" width="9" height="13" viewBox="0 0 12 17"><path d="M1 1v12.5l3.2-3 2.3 5 2-.9-2.2-4.9H10z" fill="#111" stroke="#fff" stroke-width="0.6"/></svg>
</div></body></html>
